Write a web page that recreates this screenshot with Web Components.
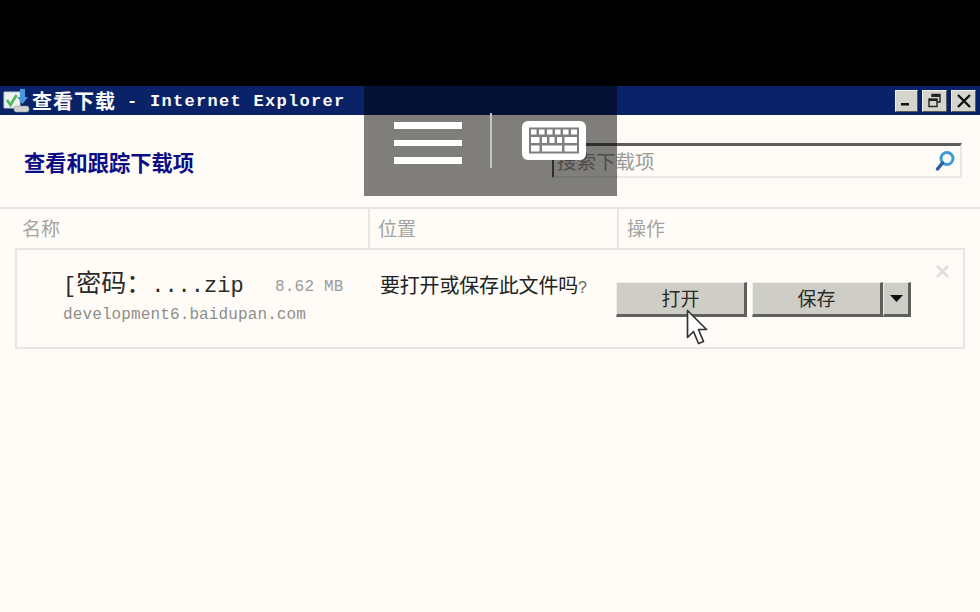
<!DOCTYPE html>
<html>
<head>
<meta charset="utf-8">
<style>
  html, body { margin: 0; height: 100%; background: #000; overflow: hidden; }
  body { font-family: "Liberation Sans", "Noto Sans CJK SC", sans-serif; }
</style>
</head>
<body>
<ie-window>
  <title-bar slot="title"></title-bar>
  <page-header></page-header>
  <column-heads></column-heads>
  <download-row></download-row>
  <touch-overlay slot="over"></touch-overlay>
  <mouse-pointer slot="over"></mouse-pointer>
</ie-window>

<script>
const CJK = '"Noto Sans CJK SC", sans-serif';

customElements.define('ie-window', class extends HTMLElement {
  constructor() {
    super();
    this.attachShadow({ mode: 'open' }).innerHTML = `
      <style>
        :host { display: block; position: relative; width: 980px; height: 612px; padding-top: 86px; box-sizing: border-box; background: #000; }
        .client { background: #fffcf7; height: 526px; }
      </style>
      <slot name="title"></slot>
      <div class="client"><slot></slot></div>
      <slot name="over"></slot>
    `;
  }
});

customElements.define('caption-btn', class extends HTMLElement {
  constructor() {
    super();
    this.attachShadow({ mode: 'open' }).innerHTML = `
      <style>
        :host {
          display: flex; align-items: center; justify-content: center;
          width: 25px; height: 22px; box-sizing: border-box;
          background: #d6d5cd;
          border: 1px solid; border-color: #f2f1ec #5a5a58 #5a5a58 #f2f1ec;
        }
        svg { display: block; }
      </style>
      <slot></slot>
    `;
  }
});

customElements.define('title-bar', class extends HTMLElement {
  constructor() {
    super();
    this.attachShadow({ mode: 'open' }).innerHTML = `
      <style>
        :host { display: flex; align-items: center; height: 29px; background: #0a2268; padding-left: 3px; padding-right: 4px; color: #fbfbfb; box-sizing: border-box; }
        .icon { width: 27px; height: 27px; flex: none; margin-right: 2px; }
        .cn { font: 700 20px/29px ${CJK}; letter-spacing: 1px; }
        .en { font: 700 17px/29px "Liberation Mono", monospace; letter-spacing: 1.3px; margin: 2px 0 0 11px; white-space: pre; }
        .btns { margin-left: auto; display: flex; gap: 4px; }
        .btns caption-btn:first-child { width: 23px; }
      </style>
      <svg class="icon" viewBox="0 0 27 27">
        <path d="M1 5h16v16H1z" fill="#eef1f2" stroke="#c3cbd4"/>
        <path d="M4 13l3.500 5 6-10" fill="none" stroke="#4fb85a" stroke-width="2.600"/>
        <path d="M17 2h5v8h3l-5.500 7-5.500-7h3z" fill="#4a97dc"/>
        <rect x="11" y="19" width="15" height="6" rx="2.500" fill="#cfd3d2" stroke="#8c9696" stroke-width=".6"/>
      </svg>
      <span class="cn">查看下载</span>
      <span class="en">- Internet Explorer</span>
      <div class="btns">
        <caption-btn><svg width="13" height="11" viewBox="0 0 13 11"><rect x="1" y="8" width="8" height="2.500" fill="#111"/></svg></caption-btn>
        <caption-btn><svg width="15" height="15" viewBox="0 0 15 15" fill="none" stroke="#222" stroke-width="1.400"><path d="M5 4V1.500h8V9h-3"/><path d="M5 3h8" stroke-width="2"/><rect x="2" y="6" width="8" height="7.500"/><path d="M2 7h8" stroke-width="2"/></svg></caption-btn>
        <caption-btn><svg width="16" height="14" viewBox="0 0 16 14" fill="none" stroke="#111" stroke-width="2.400"><path d="M2 1l12 12M14 1L2 13"/></svg></caption-btn>
      </div>
    `;
  }
});

customElements.define('page-header', class extends HTMLElement {
  constructor() {
    super();
    this.attachShadow({ mode: 'open' }).innerHTML = `
      <style>
        :host { display: flex; align-items: flex-start; height: 94px; padding: 28px 18px 0 24px; box-sizing: border-box; border-bottom: 2px solid #e6e6e2; }
        h1 { margin: 7px 0 0; font: 700 21.250px/24px ${CJK}; color: #0c0c84; width: 528px; flex: none; white-space: nowrap; }
        .search {
          flex: 1; height: 35px; box-sizing: border-box; display: flex; align-items: center; justify-content: space-between;
          border: 2px solid #e8e8e4; border-top: 3px solid #5c5c5a; border-left: 2px solid #5c5c5a;
          padding: 0 4px 0 3px; font: 400 19.500px/28px ${CJK}; color: #9a9a98;
        }
        svg { display: block; }
      </style>
      <h1>查看和跟踪下载项</h1>
      <div class="search">
        <span>搜索下载项</span>
        <svg width="22" height="22" viewBox="0 0 22 22">
          <circle cx="13" cy="8.500" r="6" fill="none" stroke="#3d9ad4" stroke-width="3"/>
          <path d="M8.500 13l-5 6" stroke="#2b5da8" stroke-width="3.500" stroke-linecap="round"/>
        </svg>
      </div>
    `;
  }
});

customElements.define('column-heads', class extends HTMLElement {
  constructor() {
    super();
    this.attachShadow({ mode: 'open' }).innerHTML = `
      <style>
        :host { display: grid; grid-template-columns: 370px 249px 1fr; height: 39px; box-sizing: border-box; }
        div { font: 400 19px/38px ${CJK}; color: #a3a3a1; padding-left: 8px; border-right: 2px solid #e6e6e2; box-sizing: border-box; }
        div:first-of-type { padding-left: 22px; }
        div:last-of-type { border-right: 0; }
      </style>
      <div>名称</div><div>位置</div><div>操作</div>
    `;
  }
});

customElements.define('push-btn', class extends HTMLElement {
  constructor() {
    super();
    this.attachShadow({ mode: 'open' }).innerHTML = `
      <style>
        :host {
          display: flex; align-items: center; justify-content: center;
          height: 35px; box-sizing: border-box; padding-bottom: 1px;
          background: #cfcec6; color: #2a2a2a;
          border-right: 3px solid #5f5f5d; border-bottom: 3px solid #5f5f5d;
          border-top: 1px solid #eeeeea; border-left: 1px solid #eeeeea;
          font: 400 19px/30px ${CJK};
        }
      </style>
      <slot></slot>
    `;
  }
});

customElements.define('download-row', class extends HTMLElement {
  constructor() {
    super();
    this.attachShadow({ mode: 'open' }).innerHTML = `
      <style>
        :host {
          display: grid; grid-template-columns: 349px 250px 1fr; position: relative;
          margin: 0 15px; width: 950px; height: 101px; box-sizing: border-box;
          border: 2px solid #e6e6e2; font-family: "Liberation Mono", monospace;
        }
        .name { padding: 15px 0 0 46px; white-space: nowrap; }
        .line1 { display: flex; align-items: flex-start; color: #2a2a2a; }
        .file { font: 400 22px/32px "Liberation Mono", ${CJK}; width: 212px; }
        .file b { font: 400 25px/32px ${CJK}; }
        .size { font: 400 16px/32px "Liberation Mono", monospace; color: #9b9b99; letter-spacing: .2px; margin-top: 6px; }
        .host { font: 400 16px/20px "Liberation Mono", monospace; color: #8e8e8c; margin-top: 2px; letter-spacing: .12px; }
        .msg { padding: 21px 0 0 14px; font: 400 20px/28px ${CJK}; color: #222; white-space: nowrap; letter-spacing: -.2px; }
        .msg i { font: 400 16px/28px "Liberation Sans", sans-serif; color: #666; }
        .acts { display: flex; padding-top: 32px; align-items: flex-start; }
        .open { width: 131px; margin-right: 5px; }
        .save { width: 131px; }
        .drop { width: 28px; }
        .close { position: absolute; top: 15px; right: 14px; display: block; }
      </style>
      <div class="name">
        <div class="line1"><span class="file">[<b>密码：</b>....zip</span><span class="size">8.62 MB</span></div>
        <div class="host">development6.baidupan.com</div>
      </div>
      <div class="msg">要打开或保存此文件吗<i>?</i></div>
      <div class="acts">
        <push-btn class="open">打开</push-btn>
        <push-btn class="save">保存</push-btn>
        <push-btn class="drop"><svg width="13" height="7" viewBox="0 0 13 7"><path d="M0 0h13L6.500 7z" fill="#111"/></svg></push-btn>
      </div>
      <svg class="close" width="13" height="13" viewBox="0 0 13 13" stroke="#dcdedf" stroke-width="2.600"><path d="M1 1l11 11M12 1L1 12"/></svg>
    `;
  }
});

customElements.define('touch-overlay', class extends HTMLElement {
  constructor() {
    super();
    this.attachShadow({ mode: 'open' }).innerHTML = `
      <style>
        :host {
          position: absolute; left: 364px; top: 86px; width: 253px; height: 110px;
          background: rgba(0, 0, 0, .5); display: flex; align-items: flex-start;
        }
        .menu { margin: 36px 0 0 30px; width: 68px; display: flex; flex-direction: column; gap: 11px; }
        .menu span { display: block; height: 6.500px; background: #fff; }
        .sep { width: 2px; height: 55px; margin: 27px 0 0 28px; background: #c4c4c4; }
        .kbd { display: block; margin: 35px 0 0 30px; }
      </style>
      <div class="menu"><span></span><span></span><span></span></div>
      <div class="sep"></div>
      <svg class="kbd" width="64" height="39" viewBox="0 0 64 39">
        <rect width="64" height="39" rx="6" fill="#fff"/>
        <rect x="7" y="6.500" width="50" height="26" fill="#7f7f7d"/>
        <g fill="#fff">
          <rect x="9" y="8.500" width="5.500" height="5"/><rect x="17" y="8.500" width="5.500" height="5"/><rect x="25" y="8.500" width="5.500" height="5"/><rect x="33" y="8.500" width="5.500" height="5"/><rect x="41" y="8.500" width="5.500" height="5"/><rect x="49" y="8.500" width="6" height="5"/>
          <rect x="9" y="16" width="8.500" height="6"/><rect x="20" y="16" width="5" height="6"/><rect x="27.500" y="16" width="5" height="6"/><rect x="35" y="16" width="5" height="6"/><rect x="42.500" y="16" width="12.500" height="6"/>
          <rect x="9" y="24.500" width="8.500" height="6"/><rect x="20" y="24.500" width="20" height="6"/><rect x="42.500" y="24.500" width="12.500" height="6"/>
        </g>
      </svg>
    `;
  }
});

// lies over the Open button, placed on the window rather than in the row
customElements.define('mouse-pointer', class extends HTMLElement {
  constructor() {
    super();
    this.attachShadow({ mode: 'open' }).innerHTML = `
      <style>
        :host { position: absolute; left: 686px; top: 309px; width: 22px; height: 37px; }
        svg { display: block; }
      </style>
      <svg width="22" height="37" viewBox="0 0 22 37">
        <path d="M1.500 1.500v27l6-6 5 12 5-2-5-12h8z" fill="#fff" stroke="#333" stroke-width="1.700" stroke-linejoin="round"/>
      </svg>
    `;
  }
});
</script>
</body>
</html>
